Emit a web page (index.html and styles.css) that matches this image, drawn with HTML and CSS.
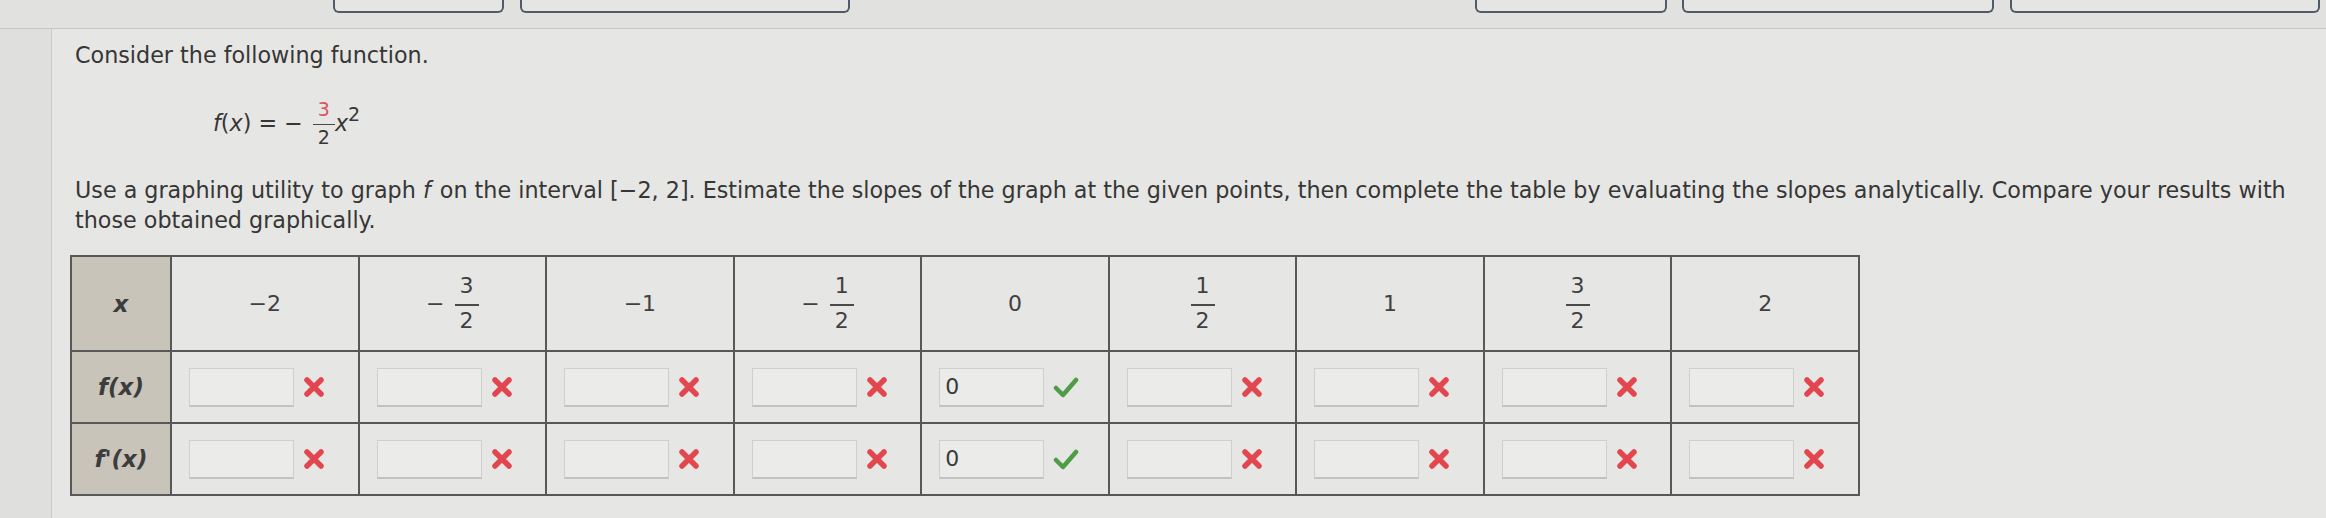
FILE: index.html
```html
<!DOCTYPE html>
<html lang="en">
<head>
<meta charset="utf-8">
<title>Consider the following function</title>
<link rel="stylesheet" href="styles.css">
</head>
<body>
<svg class="defs" width="0" height="0" aria-hidden="true">
  <defs>
    <symbol id="wrong" viewBox="0 0 24 22">
      <path d="M5 4 L19 18 M19 4 L5 18" fill="none" stroke="#e2474f" stroke-width="5.5" stroke-linecap="round"/>
    </symbol>
    <symbol id="right" viewBox="0 0 26 22">
      <path d="M3 12 L10 19 L23 4" fill="none" stroke="#4f9c46" stroke-width="4.5" stroke-linecap="round" stroke-linejoin="round"/>
    </symbol>
  </defs>
</svg>

<header class="topbar">
  <span class="tab tab-a"></span>
  <span class="tab tab-b"></span>
  <span class="tab tab-c"></span>
  <span class="tab tab-d"></span>
  <span class="tab tab-e"></span>
</header>

<main class="panel">
  <p class="lead">Consider the following function.</p>

  <div class="formula">
    <span class="fx"><i>f</i>(<i>x</i>) = −</span>
    <span class="frac frac-sm"><span class="num red">3</span><span class="den">2</span></span>
    <span class="pow"><i>x</i><sup>2</sup></span>
  </div>

  <p class="prompt"><span class="ln">Use a graphing utility to graph <i>f</i> on the interval [−2, 2]. Estimate the slopes of the graph at the given points, then complete the table by evaluating the slopes analytically. Compare your results with</span><br><span class="ln">those obtained graphically.</span></p>

  <table class="grid">
    <colgroup>
      <col class="c-head">
      <col><col><col><col><col><col><col><col><col>
    </colgroup>
    <tr class="r-x">
      <th>x</th>
      <td>−2</td>
      <td><span class="neg">−<span class="frac"><span class="num">3</span><span class="den">2</span></span></span></td>
      <td>−1</td>
      <td><span class="neg">−<span class="frac"><span class="num">1</span><span class="den">2</span></span></span></td>
      <td>0</td>
      <td><span class="frac"><span class="num">1</span><span class="den">2</span></span></td>
      <td>1</td>
      <td><span class="frac"><span class="num">3</span><span class="den">2</span></span></td>
      <td>2</td>
    </tr>
    <tr class="r-in">
      <th>f(x)</th>
      <td><div class="ans"><span class="box"></span><svg class="mk"><use href="#wrong"/></svg></div></td>
      <td><div class="ans"><span class="box"></span><svg class="mk"><use href="#wrong"/></svg></div></td>
      <td><div class="ans"><span class="box"></span><svg class="mk"><use href="#wrong"/></svg></div></td>
      <td><div class="ans"><span class="box"></span><svg class="mk"><use href="#wrong"/></svg></div></td>
      <td><div class="ans"><span class="box">0</span><svg class="ok"><use href="#right"/></svg></div></td>
      <td><div class="ans"><span class="box"></span><svg class="mk"><use href="#wrong"/></svg></div></td>
      <td><div class="ans"><span class="box"></span><svg class="mk"><use href="#wrong"/></svg></div></td>
      <td><div class="ans"><span class="box"></span><svg class="mk"><use href="#wrong"/></svg></div></td>
      <td><div class="ans"><span class="box"></span><svg class="mk"><use href="#wrong"/></svg></div></td>
    </tr>
    <tr class="r-in">
      <th>f'(x)</th>
      <td><div class="ans"><span class="box"></span><svg class="mk"><use href="#wrong"/></svg></div></td>
      <td><div class="ans"><span class="box"></span><svg class="mk"><use href="#wrong"/></svg></div></td>
      <td><div class="ans"><span class="box"></span><svg class="mk"><use href="#wrong"/></svg></div></td>
      <td><div class="ans"><span class="box"></span><svg class="mk"><use href="#wrong"/></svg></div></td>
      <td><div class="ans"><span class="box">0</span><svg class="ok"><use href="#right"/></svg></div></td>
      <td><div class="ans"><span class="box"></span><svg class="mk"><use href="#wrong"/></svg></div></td>
      <td><div class="ans"><span class="box"></span><svg class="mk"><use href="#wrong"/></svg></div></td>
      <td><div class="ans"><span class="box"></span><svg class="mk"><use href="#wrong"/></svg></div></td>
      <td><div class="ans"><span class="box"></span><svg class="mk"><use href="#wrong"/></svg></div></td>
    </tr>
  </table>
</main>
</body>
</html>
```

FILE: styles.css
```css
* { box-sizing: border-box; }

html, body { margin: 0; padding: 0; }

body {
  width: 2326px;
  height: 518px;
  overflow: hidden;
  background: #dfdfdd;
  color: #363636;
  font-family: "DejaVu Sans", Verdana, sans-serif;
}

.defs { position: absolute; width: 0; height: 0; }

/* top strip with the bottoms of toolbar buttons */
.topbar {
  height: 29px;
  display: flex;
  align-items: flex-start;
  background: #e1e1df;
  border-bottom: 1px solid #c6c6c4;
}

.tab {
  height: 13px;
  border: 2px solid #4f5a6a;
  border-top: none;
  border-radius: 0 0 6px 6px;
  background: #e5e5e3;
}
.tab-a { margin-left: 333px; width: 171px; }
.tab-b { margin-left: 16px; width: 330px; }
.tab-c { margin-left: 625px; width: 192px; }
.tab-d { margin-left: 15px; width: 312px; }
.tab-e { margin-left: 16px; width: 310px; }

/* question panel */
.panel {
  margin-left: 51px;
  height: 489px;
  border-left: 1px solid #cacac8;
  background: #e6e6e4;
  padding: 11px 0 0 23px;
}

.lead {
  margin: 0;
  font-size: 22.25px;
  line-height: 30px;
}

.formula {
  margin: 25px 0 0 138px;
  height: 56px;
  display: flex;
  align-items: center;
  font-size: 22.25px;
}

.fx { white-space: pre; margin-right: 10px; }

.frac {
  display: inline-flex;
  flex-direction: column;
  align-items: center;
  vertical-align: middle;
}
.frac .num {
  line-height: 24px;
  padding: 0 4px 6px;
}
.frac .den {
  line-height: 24px;
  padding: 3px 5px 0;
  border-top: 2px solid #4a4a4a;
}

.frac-sm { font-size: 19px; }
.frac-sm .num { line-height: 20px; padding-bottom: 5px; }
.frac-sm .den { line-height: 20px; padding-top: 2px; border-top-width: 1px; }

.red { color: #d9545c; }

.pow i { font-style: italic; }
.pow sup {
  font-size: 19px;
  vertical-align: 10px;
  line-height: 0;
}

.prompt {
  margin: 24px 0 0;
  font-size: 22.25px;
  line-height: 30px;
  white-space: nowrap;
}

.prompt i { padding-right: 2px; }

/* table */
.grid {
  margin: 20px 0 0 -5px;
  width: 1790px;
  border-collapse: collapse;
  table-layout: fixed;
  font-size: 22px;
}

.c-head { width: 100px; }

.grid th,
.grid td {
  border: 2px solid #585858;
  padding: 0;
}

.grid th {
  background: #c8c4b9;
  color: #3c3c3c;
  font-size: 23px;
  font-weight: bold;
  font-style: italic;
  text-align: center;
}

.r-x { height: 95px; }
.r-in { height: 72px; }

.r-x td {
  text-align: center;
  color: #404040;
}

.neg {
  display: inline-flex;
  align-items: center;
  gap: 10px;
}

.ans {
  display: flex;
  align-items: center;
  padding-left: 17px;
}

.box {
  width: 105px;
  height: 39px;
  border: 1px solid #cfcfcd;
  border-bottom: 2px solid #c2c2c0;
  background: #ebebe9;
  padding-left: 5px;
  line-height: 36px;
  font-size: 22px;
  color: #3a3a3a;
}

.mk {
  width: 24px;
  height: 22px;
  margin-left: 8px;
}

.ok {
  width: 26px;
  height: 22px;
  margin-left: 9px;
}
```
